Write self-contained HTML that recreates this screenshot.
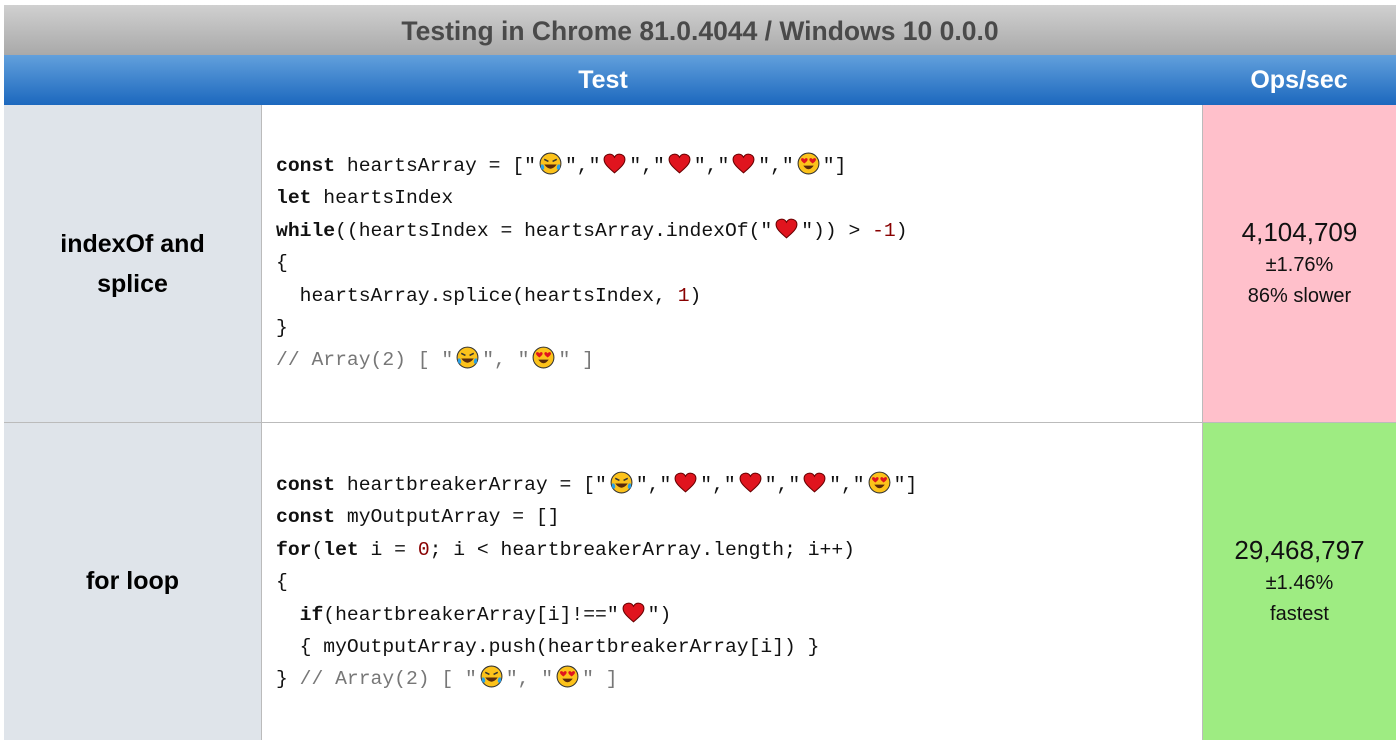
<!DOCTYPE html><html><head><meta charset="utf-8"><style>
body{margin:0;width:1400px;height:746px;background:#fff;overflow:hidden;font-family:"Liberation Sans",sans-serif}
.hd{position:absolute;left:4px;width:1392px;top:5px;height:50px;background:linear-gradient(#d0d0d0,#a9a9a9);color:#4a4a4a;font-weight:bold;font-size:26.5px;text-align:center;line-height:52px}
.bl{position:absolute;top:55px;height:50px;background:linear-gradient(#62a0dc,#1c68be);color:#fff;font-weight:bold;font-size:25px;text-align:center;line-height:50px}
.c{position:absolute;box-sizing:border-box}
.code{font-family:"Liberation Mono",monospace;font-size:19.7px;line-height:32.4px;color:#111;white-space:pre;position:absolute;left:276px}
b{font-weight:bold}.n{color:#800}.g{color:#777}
.e{display:inline-block;width:25px;height:25px;margin:0 2px;vertical-align:-5px}
.name{font-weight:bold;font-size:25px;text-align:center;line-height:40px;color:#000}
.ops{text-align:center;color:#111;font-size:20px;line-height:31px}
.ops .big{font-size:26px;line-height:36px}
</style></head><body>
<svg width="0" height="0" style="position:absolute"><defs>
<symbol id="h" viewBox="0 0 24 24"><path d="M12 21 C5 15 2 12 2 8 C2 4.5 5 3 7.5 3 C9.5 3 11 4 12 6 C13 4 14.5 3 16.5 3 C19 3 22 4.5 22 8 C22 12 19 15 12 21Z" fill="#e0141e" stroke="#600" stroke-width="1"/></symbol>
<symbol id="l" viewBox="0 0 24 24"><circle cx="12" cy="12" r="10" fill="#fcc21b" stroke="#333" stroke-width="1"/><path d="M6 8 L10 10 M18 8 L14 10" stroke="#333" stroke-width="1.5"/><path d="M6 13 Q12 21 18 13Z" fill="#5a2a0a"/><path d="M3 13 Q2 18 5 18 Q7 17 5 13Z M21 13 Q22 18 19 18 Q17 17 19 13Z" fill="#29a0e6"/></symbol>
<symbol id="k" viewBox="0 0 24 24"><circle cx="12" cy="12" r="10" fill="#fcc21b" stroke="#333" stroke-width="1"/><path d="M8 12 C5 10 4 8 5.5 7 C6.5 6.5 7.5 7 8 8 C8.5 7 9.5 6.5 10.5 7 C12 8 11 10 8 12Z M16 12 C13 10 12 8 13.5 7 C14.5 6.5 15.5 7 16 8 C16.5 7 17.5 6.5 18.5 7 C20 8 19 10 16 12Z" fill="#e0141e"/><path d="M7 14 Q12 21 17 14Z" fill="#5a2a0a"/></symbol>
</defs></svg>
<div class="hd">Testing in Chrome 81.0.4044 / Windows 10 0.0.0</div>
<div class="bl" style="left:4px;width:1198px">Test</div>
<div class="bl" style="left:1202px;width:194px">Ops/sec</div>

<div class="c" style="left:4px;top:105px;width:258px;height:318px;background:#dfe4ea;border-right:1px solid #bbb;border-bottom:1px solid #bbb"></div>
<div class="c" style="left:262px;top:105px;width:941px;height:318px;border-bottom:1px solid #bbb"></div>
<div class="c" style="left:1202px;top:105px;width:194px;height:318px;background:#ffc0cb;border-left:1px solid #bbb;border-bottom:1px solid #bbb"></div>
<div class="c" style="left:4px;top:423px;width:258px;height:317px;background:#dfe4ea;border-right:1px solid #bbb"></div>
<div class="c" style="left:1202px;top:423px;width:194px;height:317px;background:#9eec82;border-left:1px solid #bbb"></div>

<div class="c name" style="left:4px;top:224px;width:257px">indexOf and<br>splice</div>
<div class="c name" style="left:4px;top:561px;width:257px">for loop</div>

<div class="code" style="top:150px"><b>const</b> heartsArray = ["<svg class="e"><use href="#l"/></svg>","<svg class="e"><use href="#h"/></svg>","<svg class="e"><use href="#h"/></svg>","<svg class="e"><use href="#h"/></svg>","<svg class="e"><use href="#k"/></svg>"]
<b>let</b> heartsIndex
<b>while</b>((heartsIndex = heartsArray.indexOf("<svg class="e"><use href="#h"/></svg>")) &gt; <span class="n">-1</span>)
{
  heartsArray.splice(heartsIndex, <span class="n">1</span>)
}
<span class="g">// Array(2) [ "<svg class="e"><use href="#l"/></svg>", "<svg class="e"><use href="#k"/></svg>" ]</span></div>

<div class="code" style="top:469px"><b>const</b> heartbreakerArray = ["<svg class="e"><use href="#l"/></svg>","<svg class="e"><use href="#h"/></svg>","<svg class="e"><use href="#h"/></svg>","<svg class="e"><use href="#h"/></svg>","<svg class="e"><use href="#k"/></svg>"]
<b>const</b> myOutputArray = []
<b>for</b>(<b>let</b> i = <span class="n">0</span>; i &lt; heartbreakerArray.length; i++)
{
  <b>if</b>(heartbreakerArray[i]!=="<svg class="e"><use href="#h"/></svg>")
  { myOutputArray.push(heartbreakerArray[i]) }
} <span class="g">// Array(2) [ "<svg class="e"><use href="#l"/></svg>", "<svg class="e"><use href="#k"/></svg>" ]</span></div>

<div class="c ops" style="left:1203px;top:214px;width:193px"><div class="big">4,104,709</div>±1.76%<br>86% slower</div>
<div class="c ops" style="left:1203px;top:532px;width:193px"><div class="big">29,468,797</div>±1.46%<br>fastest</div>
</body></html>
